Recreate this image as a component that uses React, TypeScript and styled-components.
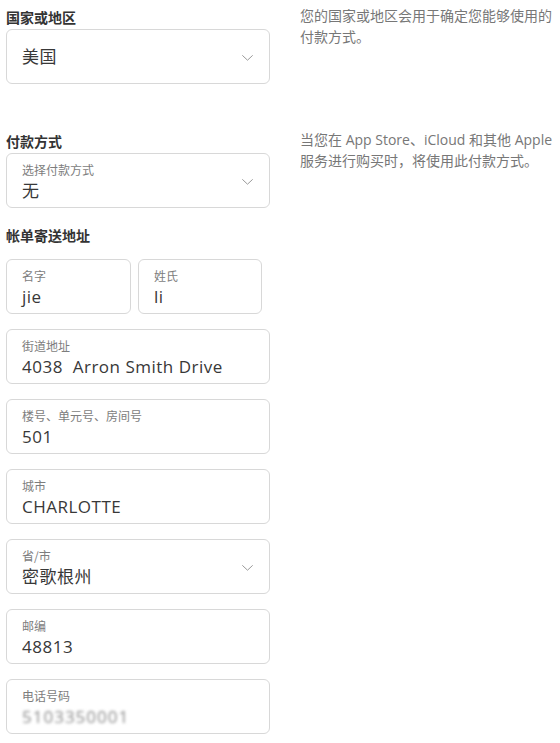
import React from "react";
import styled, { createGlobalStyle } from "styled-components";

const Global = createGlobalStyle`
  html, body { margin: 0; padding: 0; background: #ffffff; }
  body {
    font-family: "Open Sans", "Noto Sans CJK SC", sans-serif;
    color: #333333;
    -webkit-font-smoothing: antialiased;
  }
`;

const Page = styled.div`
  width: 560px;
  height: 743px;
  overflow: hidden;
  padding: 6px 0 0 6px;
  box-sizing: border-box;
  display: flex;
  flex-direction: column;
`;

const Section = styled.section<{ $gapTop?: number }>`
  display: grid;
  grid-template-columns: 264px 1fr;
  column-gap: 30px;
  margin-top: ${(p) => p.$gapTop ?? 0}px;
`;

const Column = styled.div<{ $gapTop?: number }>`
  display: flex;
  flex-direction: column;
  margin-top: ${(p) => p.$gapTop ?? 0}px;
`;

const Heading = styled.h3<{ $mb?: number }>`
  margin: 1px 0 ${(p) => p.$mb ?? 2}px 0;
  font-size: 14px;
  line-height: 20px;
  font-weight: 600;
  color: #333333;
  font-family: "Noto Sans CJK SC", sans-serif;
`;

const Help = styled.p`
  margin: 0;
  font-size: 14px;
  line-height: 20.5px;
  color: #777777;
  white-space: nowrap;
  font-family: "Open Sans", "Noto Sans CJK SC", sans-serif;
`;

const Field = styled.div<{ $single?: boolean }>`
  position: relative;
  box-sizing: border-box;
  height: 55px;
  border: 1px solid #d8d8d8;
  border-radius: 6px;
  background: #ffffff;
  padding: ${(p) => (p.$single ? "0 40px 0 15px" : "8px 40px 0 15px")};
  display: flex;
  flex-direction: column;
  justify-content: ${(p) => (p.$single ? "center" : "flex-start")};
  min-width: 0;
`;

const FieldLabel = styled.span`
  font-size: 12px;
  line-height: 16px;
  color: #7d7d7d;
  font-family: "Noto Sans CJK SC", sans-serif;
  white-space: nowrap;
`;

const FieldValue = styled.span<{ $blur?: boolean }>`
  margin-top: 2px;
  font-size: 17px;
  line-height: 22px;
  letter-spacing: 0.5px;
  color: #383838;
  white-space: nowrap;
  font-family: "Open Sans", "Noto Sans CJK SC", sans-serif;
  ${(p) =>
    p.$blur
      ? `color: #8a8a8a; filter: blur(1.6px); letter-spacing: 1px;`
      : ""}
`;

const SingleValue = styled(FieldValue)`
  margin-top: 0;
`;

const Chevron = styled.svg`
  position: absolute;
  right: 16px;
  top: 50%;
  margin-top: -2px;
  width: 11px;
  height: 6px;
`;

const FieldStack = styled.div`
  display: flex;
  flex-direction: column;
  gap: 15px;
  width: 264px;
`;

const NameRow = styled.div`
  display: grid;
  grid-template-columns: 125px 124px;
  column-gap: 7px;
`;

const Arrow = () => (
  <Chevron viewBox="0 0 11 6" fill="none">
    <path
      d="M0.6 0.6 L5.5 5.2 L10.4 0.6"
      stroke="#999999"
      strokeWidth="1"
      strokeLinecap="round"
      strokeLinejoin="round"
    />
  </Chevron>
);

type FProps = { label: string; value: string; select?: boolean; blur?: boolean };

const LabeledField = ({ label, value, select, blur }: FProps) => (
  <Field>
    <FieldLabel>{label}</FieldLabel>
    <FieldValue $blur={blur}>{value}</FieldValue>
    {select && <Arrow />}
  </Field>
);

export default function App() {
  return (
    <>
      <Global />
      <Page>
        <Section>
          <Column>
            <Heading>国家或地区</Heading>
            <Field $single>
              <SingleValue>美国</SingleValue>
              <Arrow />
            </Field>
          </Column>
          <Column>
            <Help>
              您的国家或地区会用于确定您能够使用的
              <br />
              付款方式。
            </Help>
          </Column>
        </Section>

        <Section $gapTop={46}>
          <Column>
            <Heading>付款方式</Heading>
            <LabeledField label="选择付款方式" value="无" select />
          </Column>
          <Column>
            <Help>
              当您在 App Store、iCloud 和其他 Apple
              <br />
              服务进行购买时，将使用此付款方式。
            </Help>
          </Column>
        </Section>

        <Column $gapTop={16}>
          <Heading $mb={14}>帐单寄送地址</Heading>
          <FieldStack>
            <NameRow>
              <LabeledField label="名字" value="jie" />
              <LabeledField label="姓氏" value="li" />
            </NameRow>
            <LabeledField label="街道地址" value={"4038\u00a0 Arron Smith Drive"} />
            <LabeledField label="楼号、单元号、房间号" value="501" />
            <LabeledField label="城市" value="CHARLOTTE" />
            <LabeledField label="省/市" value="密歌根州" select />
            <LabeledField label="邮编" value="48813" />
            <LabeledField label="电话号码" value="5103350001" blur />
          </FieldStack>
        </Column>
      </Page>
    </>
  );
}
